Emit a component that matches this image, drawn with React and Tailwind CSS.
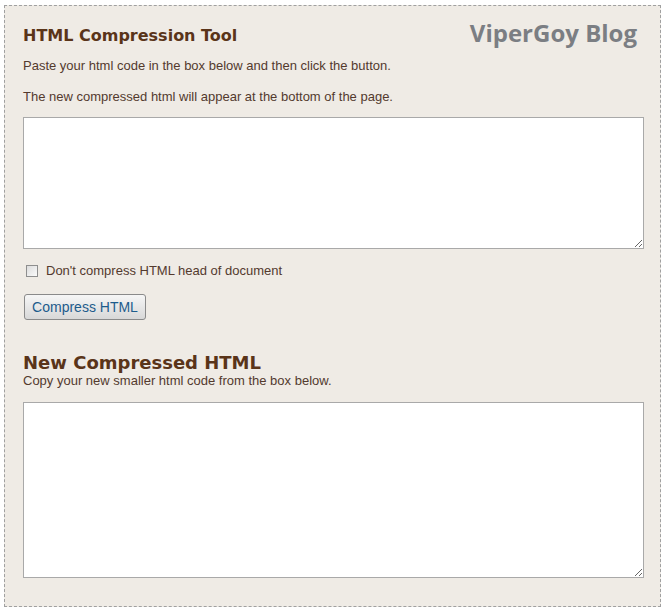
export default function App() {
  const head = { fontFamily: '"DejaVu Sans", Verdana, sans-serif' };
  return (
    <div className="w-[667px] h-[613px] bg-white pt-[5px] pl-[4px]">
      <div className="w-[657px] h-[602px] border border-dashed border-[#a0a0a0] bg-[#efebe5] pl-[18px] pr-[16px] pt-[14px]" style={{ fontFamily: '"Liberation Sans", Arial, sans-serif' }}>
        <div className="flex items-start justify-between h-[33px]">
          <h1 className="text-[16px] font-bold text-[#5a3419] mt-[4px] leading-[24px]" style={head}>HTML Compression Tool</h1>
          <div className="text-[24px] font-bold text-[#7b7e83] leading-[28px] mr-[7px] -mt-[1px]" style={{ fontFamily: '"Open Sans", sans-serif' }}>ViperGoy Blog</div>
        </div>
        <p className="text-[13px] text-[#533a2e] leading-[16px] mt-[5px]">Paste your html code in the box below and then click the button.</p>
        <p className="text-[13px] text-[#533a2e] leading-[16px] mt-[15px]">The new compressed html will appear at the bottom of the page.</p>
        <textarea className="block w-[621px] h-[132px] mt-[12px] bg-white border border-[#a9a9a9] resize-y" />
        <label className="flex items-center mt-[14px] h-[16px]">
          <input type="checkbox" className="appearance-none w-[12px] h-[12px] ml-[3px] mr-[8px] border border-[#8e8e8e] bg-gradient-to-br from-[#dcdcdc] to-[#fbfbfb]" />
          <span className="text-[13px] text-[#533a2e]">Don't compress HTML head of document</span>
        </label>
        <button className="block mt-[15px] ml-[1px] w-[122px] h-[26px] rounded-[3px] border border-[#8a8a8a] bg-gradient-to-b from-[#f6f6f6] to-[#d8d8d8] text-[14px] text-[#1d5c8c] leading-[20px]">Compress HTML</button>
        <h2 className="text-[18px] font-bold text-[#5a3419] mt-[32px] leading-[22px]" style={head}>New Compressed HTML</h2>
        <p className="text-[13px] text-[#533a2e] leading-[14px]">Copy your new smaller html code from the box below.</p>
        <textarea className="block w-[621px] h-[176px] mt-[14px] bg-white border border-[#a9a9a9] resize-y" />
      </div>
    </div>
  );
}
